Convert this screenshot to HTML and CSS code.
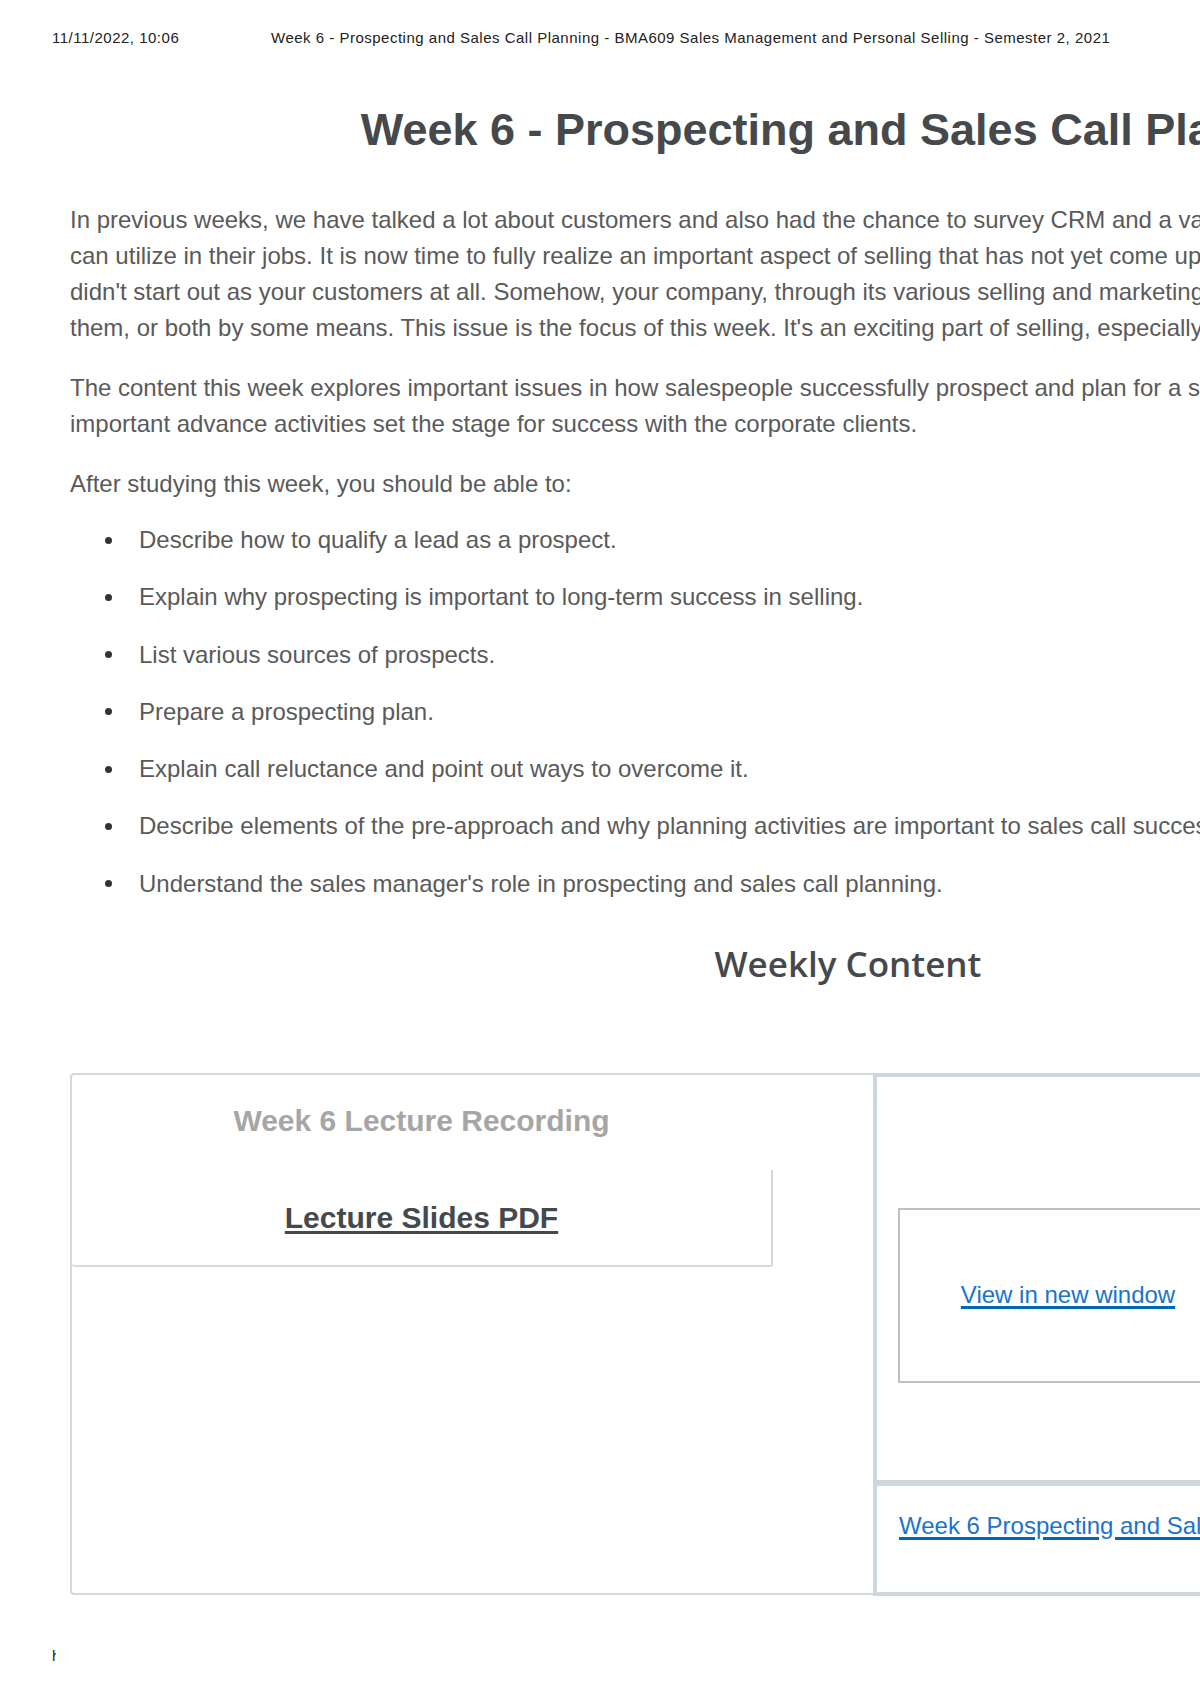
FILE: index.html
```html
<!DOCTYPE html>
<html>
<head>
  <meta charset="UTF-8">
  <title>Week 6 - Prospecting and Sales Call Planning</title>
  <meta name="viewport" content="width=device-width, initial-scale=1">
  <link rel="stylesheet" href="styles.css">
</head>
<body>
  <!-- print header -->
  <div class="print-head">
    <span class="print-date">11/11/2022, 10:06</span>
    <span class="print-title">Week 6 - Prospecting and Sales Call Planning - BMA609 Sales Management and Personal Selling - Semester 2, 2021</span>
  </div>

  <div class="page">
    <h1 class="page-title">Week 6 - Prospecting and Sales Call Planning</h1>

    <p>In previous weeks, we have talked a lot about customers and also had the chance to survey CRM and a variety of tools that salespeople<br>
    can utilize in their jobs. It is now time to fully realize an important aspect of selling that has not yet come up: your customers<br>
    didn't start out as your customers at all. Somehow, your company, through its various selling and marketing efforts, found<br>
    them, or both by some means. This issue is the focus of this week. It's an exciting part of selling, especially for new salespeople.</p>

    <p>The content this week explores important issues in how salespeople successfully prospect and plan for a sales call. These<br>
    important advance activities set the stage for success with the corporate clients.</p>

    <p class="lead-in">After studying this week, you should be able to:</p>

    <ul class="outcomes">
      <li>Describe how to qualify a lead as a prospect.</li>
      <li>Explain why prospecting is important to long-term success in selling.</li>
      <li>List various sources of prospects.</li>
      <li>Prepare a prospecting plan.</li>
      <li>Explain call reluctance and point out ways to overcome it.</li>
      <li>Describe elements of the pre-approach and why planning activities are important to sales call success.</li>
      <li>Understand the sales manager's role in prospecting and sales call planning.</li>
    </ul>

    <h2 class="section-head">Weekly Content</h2>

    <!-- content box -->
    <div class="week-box">
      <div class="left-col">
        <div class="rec-card">
          <div class="rec-title">Week 6 Lecture Recording</div>
          <div class="rec-link"><a href="#">Lecture Slides PDF</a></div>
        </div>
      </div>
      <div class="right-col">
        <div class="embed-area">
          <div class="embed-box">
            <a class="blue-link" href="#">View in new window</a>
          </div>
        </div>
        <div class="file-area">
          <a class="blue-link" href="#">Week 6 Prospecting and Sales Call Planning.pdf</a>
        </div>
      </div>
    </div>
  </div>

  <div class="print-foot"><span>h</span></div>
</body>
</html>
```

FILE: styles.css
```css
html, body {
  margin: 0;
  padding: 0;
  overflow-x: hidden;
}
body {
  width: 1200px;
  font-family: "Liberation Sans", Arial, sans-serif;
  color: #5a5a5a;
  background: #fff;
}

.print-head {
  display: flex;
  padding: 28px 0 0 52px;
  font-size: 15px;
  line-height: 20px;
  letter-spacing: 0.5px;
  color: #222;
  white-space: nowrap;
}
.print-date { width: 219px; }

.page {
  width: 1556px;
  margin-left: 70px;
}

.page-title {
  margin: 55px 0 45px;
  font-size: 45px;
  line-height: 54px;
  font-weight: bold;
  color: #46494c;
  text-align: center;
  white-space: nowrap;
}

p {
  margin: 0 0 24px;
  font-size: 24px;
  line-height: 36px;
  white-space: nowrap;
}
p.lead-in { margin-bottom: 20px; }

.outcomes {
  list-style: none;
  margin: 0;
  padding: 0 0 0 35px;
}
.outcomes li {
  display: flex;
  align-items: center;
  margin-bottom: 21.3px;
  font-size: 24px;
  line-height: 36px;
  white-space: nowrap;
}
.outcomes li::before {
  content: "";
  width: 7px;
  height: 7px;
  margin-right: 27px;
  border-radius: 50%;
  background: #333;
  flex: none;
}

.section-head {
  margin: 36px 0 83px;
  font-family: "Open Sans", sans-serif;
  font-weight: 600;
  font-size: 35px;
  line-height: 52px;
  color: #46494c;
  text-align: center;
}

.week-box {
  display: flex;
  align-items: flex-start;
}
.left-col {
  width: 803px;
  height: 522px;
  box-sizing: border-box;
  border: 2px solid #d3d9df;
  border-right: none;
  border-radius: 4px 0 0 4px;
}
.rec-card {
  width: 701px;
  border-bottom: 2px solid #d3d9df;
  border-radius: 0 0 3px 3px;
  text-align: center;
  font-size: 30px;
  line-height: 35px;
  font-weight: bold;
}
.rec-title {
  padding: 28px 2px 32px 0;
  color: #a6a6a6;
}
.rec-link {
  padding: 30px 0;
  border-right: 2px solid #d3d9df;
}
.rec-link a {
  color: #45494d;
  text-decoration-thickness: 3px;
  text-underline-offset: 3px;
}

.right-col {
  flex: 1;
  border: 4px solid #cfd6dd;
  border-right: none;
}
.embed-area {
  height: 409px;
  box-sizing: border-box;
  padding: 131px 0 0 21px;
  border-bottom: 6px solid #cfd6dd;
}
.embed-box {
  width: 340px;
  height: 175px;
  box-sizing: border-box;
  border: 2px solid #b9c1c9;
  display: flex;
  align-items: center;
  justify-content: center;
}
.file-area {
  height: 106px;
  box-sizing: border-box;
  padding: 22px 0 0 22px;
  white-space: nowrap;
}
.blue-link {
  font-size: 24px;
  line-height: 36px;
  color: #1b74c9;
  text-decoration-color: #0066b8;
  text-decoration-thickness: 3px;
  text-underline-offset: 3px;
}

.print-foot {
  padding: 50px 0 0 52px;
  font-size: 15px;
  line-height: 20px;
  color: #222;
}
.print-foot span {
  display: inline-block;
  width: 4px;
  overflow: hidden;
}
```
